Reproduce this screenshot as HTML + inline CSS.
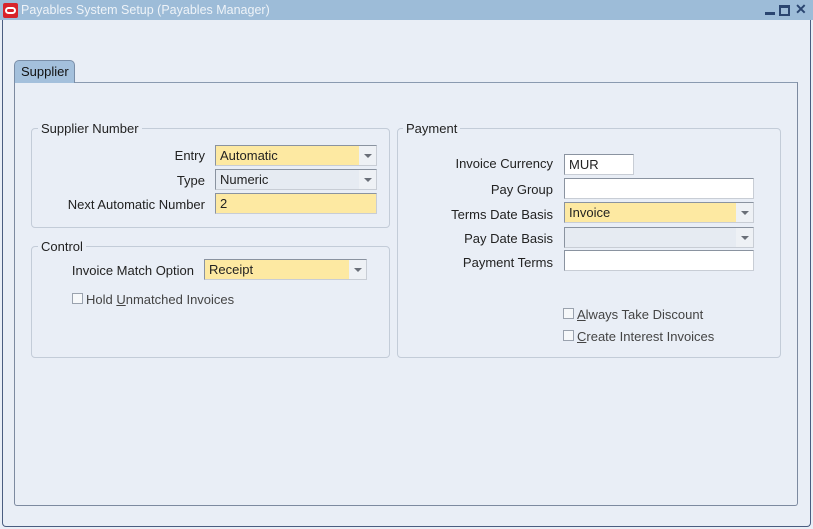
<!DOCTYPE html>
<html><head><meta charset="utf-8"><style>
*{box-sizing:border-box;margin:0;padding:0}
body{width:813px;height:529px;background:#e9eef6;font-family:"Liberation Sans",sans-serif;font-size:13px;color:#222;position:relative;overflow:hidden}
.a{position:absolute}
.title{left:0;top:0;width:813px;height:20px;background:#9dbcd8;color:#eef3f8;font-size:12.5px;line-height:20px;padding-left:21px}
.logo{left:3px;top:3px;width:15px;height:15px;background:#d8232a;border-radius:2px}
.logo:after{content:"";position:absolute;left:2px;top:4px;width:11px;height:7px;border:2px solid #fff;border-radius:5px;box-sizing:border-box}
.win{left:2px;top:20px;width:809px;height:507px;border:1px solid #4a5d80;border-top:none;border-radius:0 0 4px 4px}
.tab{left:14px;top:60px;width:61px;height:23px;background:#a4c0dc;border:1px solid #7a8ea8;border-bottom:none;border-radius:5px 5px 0 0;line-height:22px;padding-left:6px;font-size:13px;color:#111}
.panel{left:14px;top:82px;width:784px;height:424px;border:1px solid #7d8aa0;border-top-color:#8a9ab0;border-radius:0 0 3px 3px}
.grp{border:1px solid #c3ccd8;border-radius:4px}
.gl{background:#e9eef6;padding:0 3px}
.lbl{text-align:right;width:200px}
.f{height:21px;border:1px solid #8a93a0;border-bottom-color:#c8cdd5;border-right-color:#c8cdd5;background:#fff;padding-left:4px;line-height:19px;font-size:13px}
.y{background:#fde9a2}
.g{background:#e6ebf2}
.dd{position:absolute;right:0;top:0;width:17px;height:19px;background:#eef1f5}
.dd:after{content:"";position:absolute;left:5px;top:8px;border-left:4px solid transparent;border-right:4px solid transparent;border-top:4px solid #6a6f78}
.cb{width:11px;height:11px;border:1px solid #9aa2ae;background:#f6f8fa}
</style></head><body>
<div class="a title">Payables System Setup (Payables Manager)</div>
<div class="a logo"></div>
<div class="a" style="left:765px;top:5px;width:10px;height:10px;border-bottom:3px solid #2a4570"></div>
<div class="a" style="left:779px;top:5px;width:11px;height:11px;border:2px solid #2a4570;border-top-width:3px"></div>
<div class="a" style="left:795px;top:1px;font-size:14px;font-weight:bold;color:#2a4570">✕</div>
<div class="a win"></div>
<div class="a panel"></div>
<div class="a tab">Supplier</div>

<div class="a grp" style="left:31px;top:128px;width:359px;height:100px"></div>
<div class="a gl" style="left:38px;top:121px">Supplier Number</div>
<div class="a lbl" style="left:5px;top:148px">Entry</div>
<div class="a lbl" style="left:5px;top:173px">Type</div>
<div class="a lbl" style="left:5px;top:197px">Next Automatic Number</div>
<div class="a f y" style="left:215px;top:145px;width:162px">Automatic<span class="dd"></span></div>
<div class="a f g" style="left:215px;top:169px;width:162px">Numeric<span class="dd"></span></div>
<div class="a f y" style="left:215px;top:193px;width:162px">2</div>

<div class="a grp" style="left:31px;top:246px;width:359px;height:112px"></div>
<div class="a gl" style="left:38px;top:239px">Control</div>
<div class="a lbl" style="left:-6px;top:263px">Invoice Match Option</div>
<div class="a f y" style="left:204px;top:259px;width:163px">Receipt<span class="dd"></span></div>
<div class="a cb" style="left:72px;top:293px"></div>
<div class="a" style="left:86px;top:292px;color:#444">Hold <u>U</u>nmatched Invoices</div>

<div class="a grp" style="left:397px;top:128px;width:384px;height:230px"></div>
<div class="a gl" style="left:403px;top:121px">Payment</div>
<div class="a lbl" style="left:353px;top:156px">Invoice Currency</div>
<div class="a lbl" style="left:353px;top:182px">Pay Group</div>
<div class="a lbl" style="left:353px;top:207px">Terms Date Basis</div>
<div class="a lbl" style="left:353px;top:231px">Pay Date Basis</div>
<div class="a lbl" style="left:353px;top:255px">Payment Terms</div>
<div class="a f" style="left:564px;top:154px;width:70px">MUR</div>
<div class="a f" style="left:564px;top:178px;width:190px"></div>
<div class="a f y" style="left:564px;top:202px;width:190px">Invoice<span class="dd"></span></div>
<div class="a f g" style="left:564px;top:227px;width:190px"><span class="dd"></span></div>
<div class="a f" style="left:564px;top:250px;width:190px"></div>
<div class="a cb" style="left:563px;top:308px"></div>
<div class="a" style="left:577px;top:307px;color:#444"><u>A</u>lways Take Discount</div>
<div class="a cb" style="left:563px;top:330px"></div>
<div class="a" style="left:577px;top:329px;color:#444"><u>C</u>reate Interest Invoices</div>
</body></html>
